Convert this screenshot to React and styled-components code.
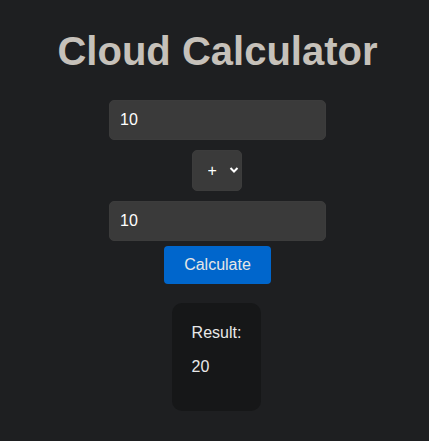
import React, { useState } from 'react';
import styled, { createGlobalStyle } from 'styled-components';

const GlobalStyle = createGlobalStyle`
  html, body {
    margin: 0;
    padding: 0;
    background: #1e1f21;
    font-family: "Liberation Sans", Arial, sans-serif;
  }
`;

const Page = styled.div`
  min-height: 441px;
  display: flex;
  flex-direction: column;
  align-items: center;
  padding: 29px 0 0 6px;
  box-sizing: border-box;
`;

const Title = styled.h1`
  margin: 0 0 26px;
  font-size: 40px;
  font-weight: 700;
  color: #c6c1ba;
`;

const Fields = styled.div`
  display: flex;
  flex-direction: column;
  align-items: center;
  gap: 10px;
`;

const NumberInput = styled.input`
  width: 217px;
  height: 40px;
  box-sizing: border-box;
  padding: 0 10px;
  border: 1px solid #3c3c3c;
  border-radius: 5px;
  background: #3a3a3a;
  color: #ffffff;
  font-family: inherit;
  font-size: 16px;
  outline: none;
`;

const SelectWrap = styled.div`
  position: relative;
  width: 50px;
  height: 41px;
  margin-right: 2px;
`;

const OperatorSelect = styled.select`
  appearance: none;
  width: 100%;
  height: 100%;
  box-sizing: border-box;
  padding: 0 0 0 15px;
  border: 1px solid #3c3c3c;
  border-radius: 5px;
  background: #3a3a3a;
  color: #ffffff;
  font-family: inherit;
  font-size: 16px;
  outline: none;
`;

const Chevron = styled.svg`
  position: absolute;
  right: 3px;
  top: 16px;
  pointer-events: none;
`;

const CalcButton = styled.button`
  margin-top: 5px;
  padding: 0 20px;
  height: 38px;
  border: none;
  border-radius: 4px;
  background: #0066cc;
  color: #e6e6e6;
  font-family: inherit;
  font-size: 16px;
  cursor: pointer;
`;

const ResultCard = styled.div`
  margin: 19px 2px 0 0;
  padding: 21px 20px 35px;
  border-radius: 10px;
  background: #161718;
  color: #e8e8e8;
  font-size: 16px;
`;

const ResultLine = styled.p`
  margin: 0 0 ${props => (props.$last ? 0 : 16)}px;
`;

export default function App() {
  const [a, setA] = useState('10');
  const [b, setB] = useState('10');
  const [op, setOp] = useState('+');
  const [result, setResult] = useState(20);

  const calculate = () => {
    const x = parseFloat(a);
    const y = parseFloat(b);
    const ops = { '+': x + y, '-': x - y, '*': x * y, '/': x / y };
    setResult(ops[op]);
  };

  return (
    <>
      <GlobalStyle />
      <Page>
        <Title>Cloud Calculator</Title>
        <Fields>
          <NumberInput type="number" value={a} onChange={e => setA(e.target.value)} />
          <SelectWrap>
            <OperatorSelect value={op} onChange={e => setOp(e.target.value)}>
              <option value="+">+</option>
              <option value="-">-</option>
              <option value="*">*</option>
              <option value="/">/</option>
            </OperatorSelect>
            <Chevron width="10" height="8" viewBox="0 0 10 8">
              <path d="M1.5 2 L5 5.5 L8.5 2" fill="none" stroke="#ffffff" strokeWidth="2" />
            </Chevron>
          </SelectWrap>
          <NumberInput type="number" value={b} onChange={e => setB(e.target.value)} />
        </Fields>
        <CalcButton onClick={calculate}>Calculate</CalcButton>
        <ResultCard>
          <ResultLine>Result:</ResultLine>
          <ResultLine $last>{result}</ResultLine>
        </ResultCard>
      </Page>
    </>
  );
}
